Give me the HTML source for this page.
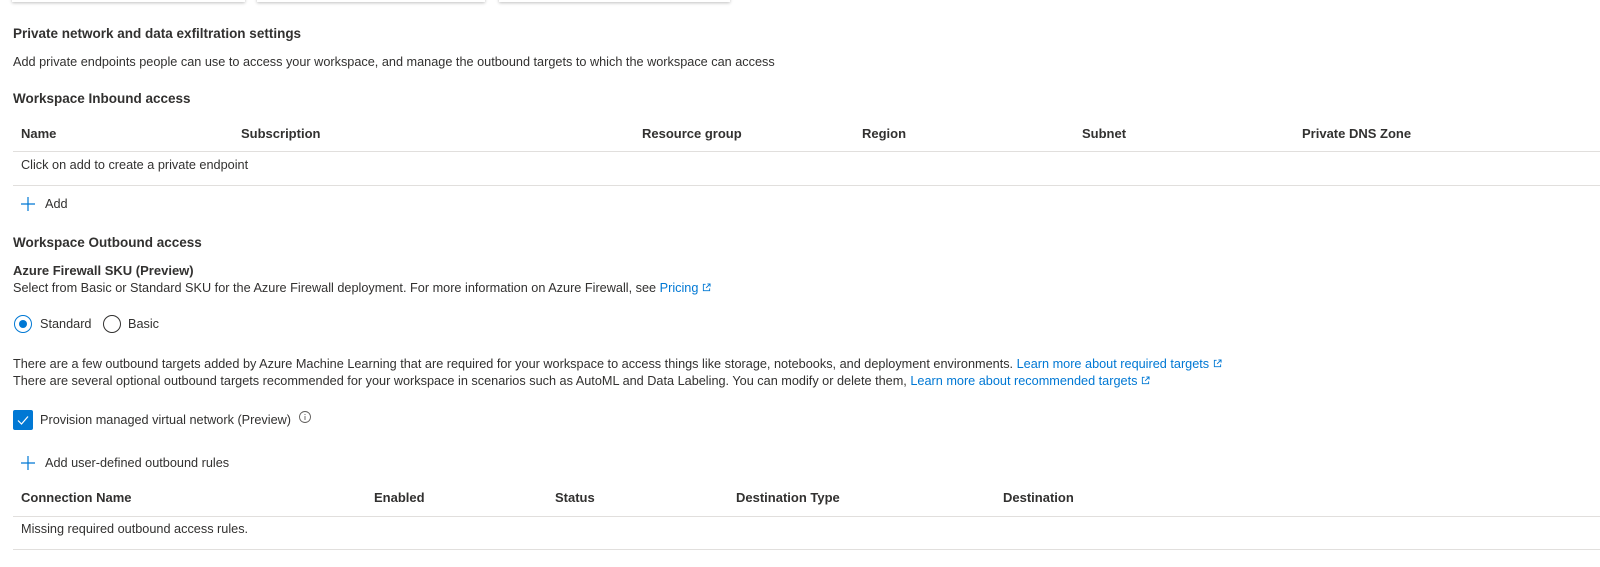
<!DOCTYPE html>
<html><head><meta charset="utf-8"><style>
*{margin:0;padding:0;box-sizing:border-box}
body{width:1600px;height:567px;background:#fff;font-family:"Liberation Sans",sans-serif;font-size:12.7px;color:#323130;position:relative;overflow:hidden}
.a{position:absolute;white-space:nowrap}
.b{font-weight:bold;font-size:13px}
.card{position:absolute;top:-10px;height:12px;background:#fff;box-shadow:0 1px 3px rgba(0,0,0,.25)}
.line{position:absolute;left:13px;right:0;height:1px;background:#e1dfdd}
a{color:#0078d4;text-decoration:none}
.ext{display:inline-block;width:9px;height:9px;margin-left:4px;vertical-align:0}
</style></head><body>
<div class="card" style="left:12px;width:233px"></div>
<div class="card" style="left:257px;width:228px"></div>
<div class="card" style="left:499px;width:231px"></div>

<div class="a b" style="left:13px;top:26px;font-size:13.5px">Private network and data exfiltration settings</div>
<div class="a" style="left:13px;top:55px">Add private endpoints people can use to access your workspace, and manage the outbound targets to which the workspace can access</div>
<div class="a b" style="left:13px;top:91px;font-size:13.5px">Workspace Inbound access</div>

<div class="a b" style="left:21px;top:126px">Name</div>
<div class="a b" style="left:241px;top:126px">Subscription</div>
<div class="a b" style="left:642px;top:126px">Resource group</div>
<div class="a b" style="left:862px;top:126px">Region</div>
<div class="a b" style="left:1082px;top:126px">Subnet</div>
<div class="a b" style="left:1302px;top:126px">Private DNS Zone</div>
<div class="line" style="top:151px"></div>
<div class="a" style="left:21px;top:158px">Click on add to create a private endpoint</div>
<div class="line" style="top:185px"></div>
<svg class="a" style="left:21px;top:197px" width="14" height="14"><path d="M7 0v14M0 7h14" stroke="#0078d4" stroke-width="1.2"/></svg>
<div class="a" style="left:45px;top:197px">Add</div>

<div class="a b" style="left:13px;top:235px;font-size:13.5px">Workspace Outbound access</div>
<div class="a b" style="left:13px;top:263px">Azure Firewall SKU (Preview)</div>
<div class="a" style="left:13px;top:281px">Select from Basic or Standard SKU for the Azure Firewall deployment. For more information on Azure Firewall, see <a>Pricing<svg class="ext" viewBox="0 0 10 10"><path d="M4 1.5H1.5v7h7V6M6 1h3v3M9 1L4.5 5.5" fill="none" stroke="#0078d4" stroke-width="1"/></svg></a></div>

<svg class="a" style="left:13px;top:314px" width="20" height="20"><circle cx="10" cy="10" r="8.5" fill="none" stroke="#0078d4" stroke-width="1"/><circle cx="10" cy="10" r="4" fill="#0078d4"/></svg>
<div class="a" style="left:40px;top:317px">Standard</div>
<svg class="a" style="left:102px;top:314px" width="20" height="20"><circle cx="10" cy="10" r="8.5" fill="none" stroke="#323130" stroke-width="1"/></svg>
<div class="a" style="left:128px;top:317px">Basic</div>

<div class="a" style="left:13px;top:357px">There are a few outbound targets added by Azure Machine Learning that are required for your workspace to access things like storage, notebooks, and deployment environments. <a>Learn more about required targets<svg class="ext" viewBox="0 0 10 10"><path d="M4 1.5H1.5v7h7V6M6 1h3v3M9 1L4.5 5.5" fill="none" stroke="#0078d4" stroke-width="1"/></svg></a></div>
<div class="a" style="left:13px;top:374px">There are several optional outbound targets recommended for your workspace in scenarios such as AutoML and Data Labeling. You can modify or delete them, <a>Learn more about recommended targets<svg class="ext" viewBox="0 0 10 10"><path d="M4 1.5H1.5v7h7V6M6 1h3v3M9 1L4.5 5.5" fill="none" stroke="#0078d4" stroke-width="1"/></svg></a></div>

<svg class="a" style="left:13px;top:410px" width="20" height="20"><rect width="20" height="20" rx="2" fill="#0078d4"/><path d="M5 10.5l3.5 3.5L15 6.5" fill="none" stroke="#fff" stroke-width="1.2"/></svg>
<div class="a" style="left:40px;top:413px">Provision managed virtual network (Preview)</div>
<svg class="a" style="left:298px;top:410px" width="14" height="14"><circle cx="7" cy="7" r="5.5" fill="none" stroke="#605e5c" stroke-width="0.9"/><path d="M7 6v4M7 4v1" stroke="#605e5c" stroke-width="0.9"/></svg>

<svg class="a" style="left:21px;top:456px" width="14" height="14"><path d="M7 0v14M0 7h14" stroke="#0078d4" stroke-width="1.2"/></svg>
<div class="a" style="left:45px;top:456px">Add user-defined outbound rules</div>

<div class="a b" style="left:21px;top:490px">Connection Name</div>
<div class="a b" style="left:374px;top:490px">Enabled</div>
<div class="a b" style="left:555px;top:490px">Status</div>
<div class="a b" style="left:736px;top:490px">Destination Type</div>
<div class="a b" style="left:1003px;top:490px">Destination</div>
<div class="line" style="top:516px"></div>
<div class="a" style="left:21px;top:522px">Missing required outbound access rules.</div>
<div class="line" style="top:549px"></div>
</body></html>
